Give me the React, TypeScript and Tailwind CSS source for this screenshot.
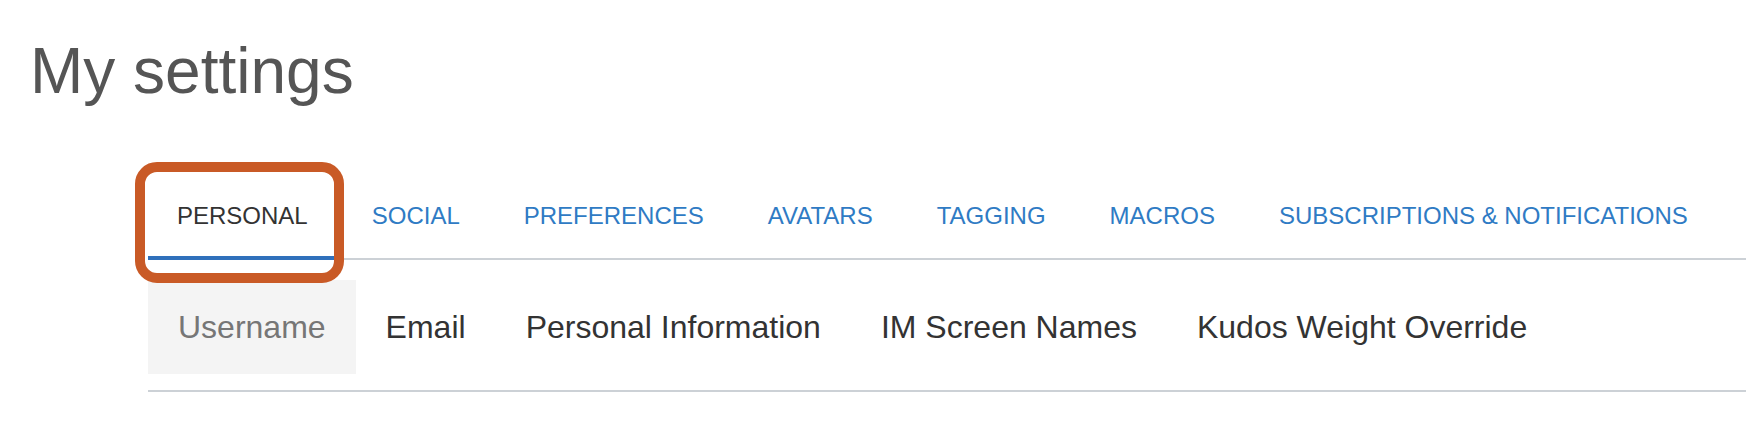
import React from 'react';

const tabs = [
  'Personal',
  'Social',
  'Preferences',
  'Avatars',
  'Tagging',
  'Macros',
  'Subscriptions & Notifications',
];

const subTabs = ['Username', 'Email', 'Personal Information', 'IM Screen Names', 'Kudos Weight Override'];

export default function App() {
  const activeTab = 'Personal';
  const activeSub = 'Username';

  return (
    <div className="min-h-screen bg-white font-['Liberation_Sans',Arial,sans-serif]">
      <h1 className="pl-[30px] pt-[34px] text-[64px] leading-[74px] font-normal text-[#555555]">My settings</h1>

      <div className="ml-[148px] mt-[66px]">
        {/* top tabs */}
        <div className="flex gap-[6px] border-b-2 border-[#ccd1d6]">
          {tabs.map((t) =>
            t === activeTab ? (
              <div
                key={t}
                className="relative px-[29px] pt-[28px] pb-[26px] -mb-[2px] border-b-4 border-[#2f70bb] text-[24px] leading-[28px] uppercase text-[#333333]"
              >
                {t}
                {/* highlight annotation */}
                <div className="pointer-events-none absolute -left-[13px] -top-[12px] w-[209px] h-[121px] rounded-[22px] border-[10px] border-[#c95a26]" />
              </div>
            ) : (
              <div
                key={t}
                className="px-[29px] pt-[28px] pb-[28px] text-[24px] leading-[28px] uppercase text-[#2f7bc4] cursor-pointer"
              >
                {t}
              </div>
            )
          )}
        </div>

        {/* sub tabs */}
        <div className="mt-[20px] pb-[16px] border-b-2 border-[#ccd1d6]">
          <div className="flex">
            {subTabs.map((s) => (
              <div
                key={s}
                className={
                  s === activeSub
                    ? 'h-[94px] px-[30px] flex items-center text-[32px] bg-[#f4f4f4] text-[#767676]'
                    : 'h-[94px] px-[30px] flex items-center text-[32px] text-[#333333]'
                }
              >
                {s}
              </div>
            ))}
          </div>
        </div>
      </div>
    </div>
  );
}
